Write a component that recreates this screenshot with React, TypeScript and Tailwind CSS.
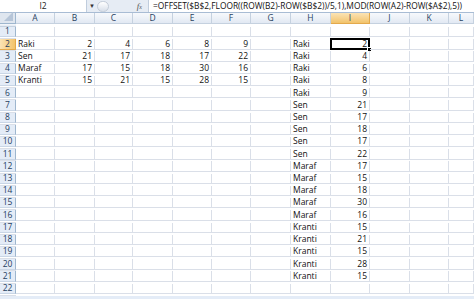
import React from "react";

const COLS = ["A", "B", "C", "D", "E", "F", "G", "H", "I", "J", "K", "L"];

// each row of the sheet shares this track list so the gridlines line up
const GRID =
  "grid grid-cols-[16px_39px_40px_38px_40px_39px_39px_40px_40px_39px_40px_39px_1fr]";

type Row = (string | number | null)[];

const table: Row[] = [
  ["Raki", 2, 4, 6, 8, 9],
  ["Sen", 21, 17, 18, 17, 22],
  ["Maraf", 17, 15, 18, 30, 16],
  ["Kranti", 15, 21, 15, 28, 15],
];

const stacked: [string, number][] = [
  ["Raki", 2], ["Raki", 4], ["Raki", 6], ["Raki", 8], ["Raki", 9],
  ["Sen", 21], ["Sen", 17], ["Sen", 18], ["Sen", 17], ["Sen", 22],
  ["Maraf", 17], ["Maraf", 15], ["Maraf", 18], ["Maraf", 30], ["Maraf", 16],
  ["Kranti", 15], ["Kranti", 21], ["Kranti", 15], ["Kranti", 28], ["Kranti", 15],
];

function buildRows(): Row[] {
  const rows: Row[] = [];
  for (let r = 1; r <= 22; r++) {
    const cells: Row = Array(12).fill(null);
    const t = table[r - 2];
    if (t) t.forEach((v, i) => (cells[i] = v));
    const s = stacked[r - 2];
    if (s) {
      cells[7] = s[0];
      cells[8] = s[1];
    }
    rows.push(cells);
  }
  return rows;
}

function FormulaBar() {
  return (
    <div className="flex h-[13px] bg-[#e6ecf4] border-b border-[#a8bcd4]">
      <div className="w-[87px] bg-white border-r border-[#c0cddd] flex items-center justify-center text-[#222]">
        I2
      </div>
      <div className="w-[10px] flex items-center justify-center text-[6px] text-[#333]">▼</div>
      <div className="w-[51px] flex items-center">
        <div className="w-[12px] h-[11px] rounded-full border border-[#c3ccd8] bg-gradient-to-b from-white to-[#d9e0ea]" />
        <div className="flex-1" />
        <span className="mr-[6px] font-['Liberation_Serif',serif] italic text-[9px] text-[#555]">
          f<span className="text-[6px]">x</span>
        </span>
      </div>
      <div className="flex-1 bg-white border-l border-[#c0cddd] flex items-center pl-[4px] text-[8.4px] text-[#111] whitespace-nowrap overflow-hidden">
        =OFFSET($B$2,FLOOR((ROW(B2)-ROW($B$2))/5,1),MOD(ROW(A2)-ROW($A$2),5))
      </div>
    </div>
  );
}

function HeaderRow() {
  return (
    <div className={`${GRID} h-[14px]`}>
      <div className="bg-[#dfe6ef] border-r border-b border-[#9eb6ce] relative">
        <div className="absolute right-[2px] bottom-[2px] w-0 h-0 border-l-[9px] border-l-transparent border-b-[9px] border-b-[#b6c5d8]" />
      </div>
      {COLS.map((c) =>
        c === "I" ? (
          <div
            key={c}
            className="bg-gradient-to-b from-[#fbe3b4] to-[#f2c36a] border-r border-b border-[#e3a94c] flex items-center justify-center text-[#27415f]"
          >
            {c}
          </div>
        ) : (
          <div
            key={c}
            className="bg-gradient-to-b from-[#f7f9fc] to-[#e2e9f3] border-r border-b border-[#c5d1df] flex items-center justify-center text-[#27415f]"
          >
            {c}
          </div>
        )
      )}
      <div className="bg-gradient-to-b from-[#f7f9fc] to-[#e2e9f3] border-b border-[#c5d1df]" />
    </div>
  );
}

function Cell({ v, selected }: { v: string | number | null; selected?: boolean }) {
  const num = typeof v === "number";
  return (
    <div
      className={`relative border-r border-b border-[#dadfe8] flex items-center px-[2px] ${
        num ? "justify-end" : "justify-start"
      } text-[#111] whitespace-nowrap`}
    >
      {v}
      {selected && (
        <>
          <div className="absolute -left-[1px] -top-[1px] -right-[1px] -bottom-[1px] border-2 border-black" />
          <div className="absolute -right-[3px] -bottom-[3px] w-[5px] h-[5px] bg-black border border-white" />
        </>
      )}
    </div>
  );
}

export default function App() {
  const rows = buildRows();
  return (
    <div className="w-[474px] h-[299px] overflow-hidden bg-white font-['Open_Sans',sans-serif] text-[8.5px] leading-none">
      <FormulaBar />
      <HeaderRow />
      {rows.map((cells, i) => {
        const n = i + 1;
        return (
          <div key={n} className={`${GRID} h-[12.23px]`}>
            {n === 2 ? (
              <div className="bg-gradient-to-r from-[#fbe3b4] to-[#f2c36a] border-r border-b border-[#e3a94c] flex items-center justify-center text-[#27415f]">
                {n}
              </div>
            ) : (
              <div className="bg-[#e4ecf7] border-r border-b border-r-[#9eb6ce] border-b-[#c9d6e6] flex items-center justify-center text-[#27415f]">
                {n}
              </div>
            )}
            {cells.map((v, c) => (
              <Cell key={c} v={v} selected={n === 2 && c === 8} />
            ))}
            <div className="border-b border-[#dadfe8]" />
          </div>
        );
      })}
      <div className="h-[4px] bg-[#e4ecf7]" />
    </div>
  );
}
